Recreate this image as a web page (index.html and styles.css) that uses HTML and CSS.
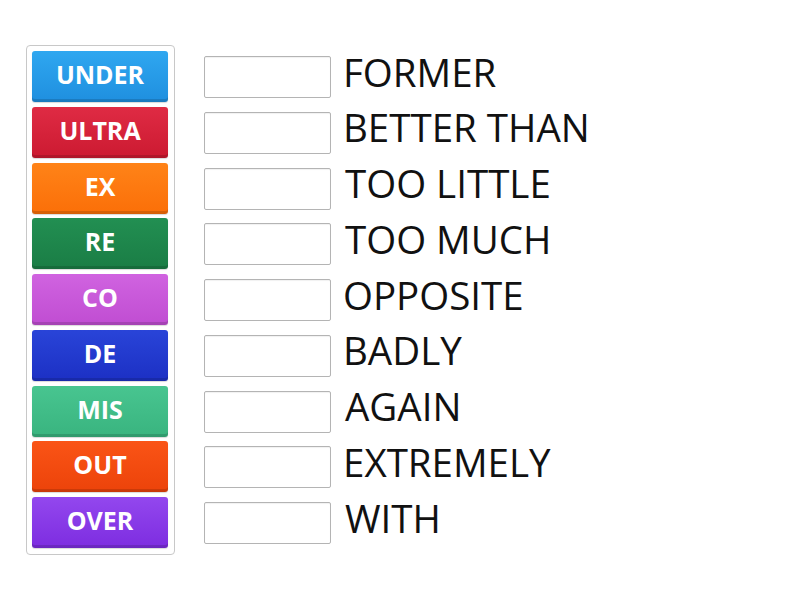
FILE: index.html
```html
<!DOCTYPE html>
<html>
<head>
<meta charset="utf-8">
<link rel="stylesheet" href="styles.css">
</head>
<body>
<div class="page">
  <div class="tray">
    <div class="tile c1">UNDER</div>
    <div class="tile c2">ULTRA</div>
    <div class="tile c3">EX</div>
    <div class="tile c4">RE</div>
    <div class="tile c5">CO</div>
    <div class="tile c6">DE</div>
    <div class="tile c7">MIS</div>
    <div class="tile c8">OUT</div>
    <div class="tile c9">OVER</div>
  </div>
  <div class="targets">
    <div class="row"><div class="slot"></div><div class="label">FORMER</div></div>
    <div class="row"><div class="slot"></div><div class="label">BETTER THAN</div></div>
    <div class="row"><div class="slot"></div><div class="label shift">TOO LITTLE</div></div>
    <div class="row"><div class="slot"></div><div class="label shift">TOO MUCH</div></div>
    <div class="row"><div class="slot"></div><div class="label">OPPOSITE</div></div>
    <div class="row"><div class="slot"></div><div class="label">BADLY</div></div>
    <div class="row"><div class="slot"></div><div class="label shift">AGAIN</div></div>
    <div class="row"><div class="slot"></div><div class="label">EXTREMELY</div></div>
    <div class="row"><div class="slot"></div><div class="label shift">WITH</div></div>
  </div>
</div>
</body>
</html>
```
FILE: styles.css
```css
html, body {
  margin: 0;
  padding: 0;
  background: #ffffff;
  font-family: "Open Sans", "Liberation Sans", sans-serif;
}
.page {
  display: flex;
  align-items: flex-start;
  padding: 45px 0 0 26px;
}
.tray {
  width: 136px;
  padding: 5px 6px 6px 5px;
  border: 1px solid #c8c8c8;
  border-radius: 4px;
  display: flex;
  flex-direction: column;
  gap: 4.75px;
}
.tile {
  height: 51px;
  border-radius: 3px;
  color: #ffffff;
  font-weight: 700;
  font-size: 25px;
  display: flex;
  align-items: center;
  justify-content: center;
  box-shadow: inset 0 -3px 0 rgba(0,0,0,0.14), 0 1px 1px rgba(0,0,0,0.15);
  box-sizing: border-box;
  padding-bottom: 5px;
}
.c1 { background: linear-gradient(#2fa7f0, #1f8fdf); }
.c2 { background: linear-gradient(#df2b44, #cc1a31); }
.c3 { background: linear-gradient(#ff8318, #fb6f08); }
.c4 { background: linear-gradient(#228f52, #1a7d45); }
.c5 { background: linear-gradient(#d063e0, #c04dd2); }
.c6 { background: linear-gradient(#2944d8, #1c30c4); }
.c7 { background: linear-gradient(#48c590, #39b47f); }
.c8 { background: linear-gradient(#fa5416, #ec430a); }
.c9 { background: linear-gradient(#9347ee, #7d2de0); }
.targets {
  margin-left: 29px;
  padding-top: 11px;
  display: flex;
  flex-direction: column;
}
.row {
  height: 55.75px;
  display: flex;
  align-items: flex-start;
}
.slot {
  width: 125px;
  height: 40px;
  border: 1px solid #b4b4b4;
  border-radius: 2px;
  background: #fff;
  box-shadow: inset 0 1px 1px rgba(0,0,0,0.06);
}
.label {
  margin-left: 12px;
  margin-top: -7.5px;
  font-size: 38.5px;
  line-height: 46px;
  color: #111;
}
.label.shift { margin-left: 14px; }
```
